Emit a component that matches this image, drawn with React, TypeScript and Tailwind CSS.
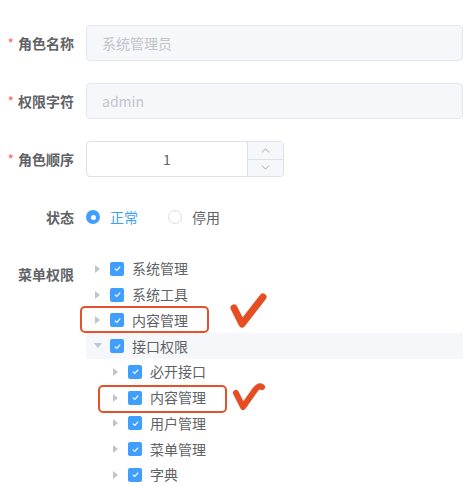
import { ChevronUp, ChevronDown } from 'lucide-react'

const font = { fontFamily: '"Noto Sans CJK SC", "Noto Sans", sans-serif' }

type Node = { label: string; level: number; expanded?: boolean; active?: boolean }

const nodes: Node[] = [
  { label: '系统管理', level: 0 },
  { label: '系统工具', level: 0 },
  { label: '内容管理', level: 0 },
  { label: '接口权限', level: 0, expanded: true, active: true },
  { label: '必开接口', level: 1 },
  { label: '内容管理', level: 1 },
  { label: '用户管理', level: 1 },
  { label: '菜单管理', level: 1 },
  { label: '字典', level: 1 },
]

function Label({ text, required }: { text: string; required?: boolean }) {
  return (
    <div className="w-[86px] shrink-0 pr-3 h-9 flex items-center justify-end text-[14px] font-bold text-[#606266]">
      {required && <span className="text-[#f56c6c] mr-1 font-normal">*</span>}
      {text}
    </div>
  )
}

function Check() {
  return (
    <span className="w-[14px] h-[14px] rounded-[2px] bg-[#409eff] flex items-center justify-center shrink-0">
      <svg width="9" height="9" viewBox="0 0 10 10">
        <path d="M2 5.2 L4.2 7.2 L8 2.8" fill="none" stroke="white" strokeWidth="1.3" />
      </svg>
    </span>
  )
}

function Caret({ down }: { down?: boolean }) {
  return (
    <span className="w-6 h-full flex items-center justify-center shrink-0">
      {down ? (
        <svg width="8" height="6" viewBox="0 0 8 6"><path d="M0 0 L8 0 L4 5 Z" fill="#c0c4cc" /></svg>
      ) : (
        <svg width="6" height="8" viewBox="0 0 6 8"><path d="M0 0 L5 4 L0 8 Z" fill="#c0c4cc" /></svg>
      )}
    </span>
  )
}

export default function App() {
  return (
    <div className="relative w-[474px] h-[486px] bg-white overflow-hidden pt-[25px]" style={font}>
      <div className="flex flex-col gap-[22px]">
        <div className="flex">
          <Label text="角色名称" required />
          <div className="w-[377px] h-9 rounded bg-[#f5f7fa] border border-[#e4e7ed] flex items-center px-[15px] text-[14px] text-[#c0c4cc]">
            系统管理员
          </div>
        </div>
        <div className="flex">
          <Label text="权限字符" required />
          <div className="w-[377px] h-9 rounded bg-[#f5f7fa] border border-[#e4e7ed] flex items-center px-[15px] text-[14px] text-[#c0c4cc]">
            admin
          </div>
        </div>
        <div className="flex">
          <Label text="角色顺序" required />
          <div className="w-[198px] h-9 rounded border border-[#dcdfe6] flex overflow-hidden">
            <div className="flex-1 flex items-center justify-center text-[14px] text-[#606266]">1</div>
            <div className="w-9 border-l border-[#dcdfe6] bg-[#f5f7fa] flex flex-col text-[#909399]">
              <div className="flex-1 flex items-center justify-center border-b border-[#dcdfe6]">
                <ChevronUp size={13} strokeWidth={1.5} />
              </div>
              <div className="flex-1 flex items-center justify-center">
                <ChevronDown size={13} strokeWidth={1.5} />
              </div>
            </div>
          </div>
        </div>
        <div className="flex">
          <Label text="状态" />
          <div className="h-9 flex items-center text-[14px]">
            <span className="w-[14px] h-[14px] rounded-full bg-[#409eff] flex items-center justify-center">
              <span className="w-[5px] h-[5px] rounded-full bg-white" />
            </span>
            <span className="ml-[10px] text-[#409eff] mr-[30px]">正常</span>
            <span className="w-[14px] h-[14px] rounded-full border border-[#dcdfe6] bg-white" />
            <span className="ml-[10px] text-[#606266]">停用</span>
          </div>
        </div>
        <div className="flex -mt-px">
          <Label text="菜单权限" />
          <div className="w-[377px] flex flex-col">
            {nodes.map((n, i) => (
              <div
                key={i}
                className={`h-[25.75px] flex items-center text-[14px] text-[#606266] ${n.active ? 'bg-[#f5f7fa]' : ''}`}
              >
                {n.level === 1 && <span className="w-[18px] shrink-0" />}
                <Caret down={n.expanded} />
                <Check />
                <span className="ml-2">{n.label}</span>
              </div>
            ))}
          </div>
        </div>
      </div>

      {/* 标注 */}
      <div className="absolute left-[80px] top-[306px] w-[129px] h-[27px] border-2 border-[#e4512a] rounded-[5px]" />
      <div className="absolute left-[98px] top-[385px] w-[129px] h-[28px] border-2 border-[#e4512a] rounded-[5px]" />
      <svg className="absolute left-0 top-0" width="474" height="486" viewBox="0 0 474 486">
        <path d="M234 308 L242 324 L263 297" fill="none" stroke="#e64d23" strokeWidth="7" strokeLinecap="round" strokeLinejoin="round" />
        <path d="M236 393 L243 407 L255 390 Q259 385 262 387" fill="none" stroke="#e64d23" strokeWidth="6" strokeLinecap="round" strokeLinejoin="round" />
      </svg>
    </div>
  )
}
